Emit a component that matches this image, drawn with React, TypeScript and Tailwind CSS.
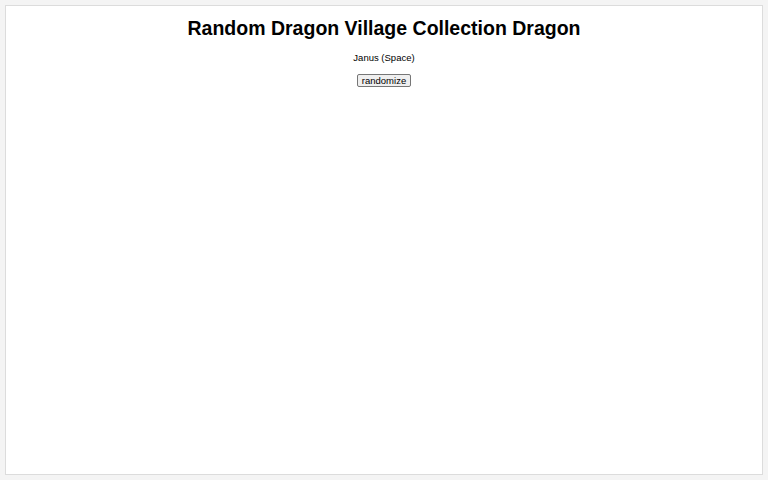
import React, { useState } from 'react';

const dragons = ['Janus (Space)', 'Aeon (Time)', 'Brimstone (Fire)', 'Glacies (Ice)'];

const App: React.FC = () => {
    const [dragon, setDragon] = useState(dragons[0]);

    const randomize = () => {
        setDragon(dragons[Math.floor(Math.random() * dragons.length)]);
    };

    return (
        <div className="h-[480px] bg-[#f4f4f4] p-[5px] font-['Liberation_Sans',Arial,sans-serif] text-black">
            <div className="h-[470px] border border-[#dcdcdc] bg-white text-center">
                <h1 className="mt-[10px] text-[19.5px] leading-[24px] font-bold">Random Dragon Village Collection Dragon</h1>
                <p className="mt-[12px] text-[9.5px] leading-[12px]">{dragon}</p>
                <button
                    className="mt-[10px] rounded-[2px] border border-[#767676] bg-[#efefef] px-[4px] text-[9.5px] leading-[11px]"
                    onClick={randomize}
                >
                    randomize
                </button>
            </div>
        </div>
    );
};

export default App;
